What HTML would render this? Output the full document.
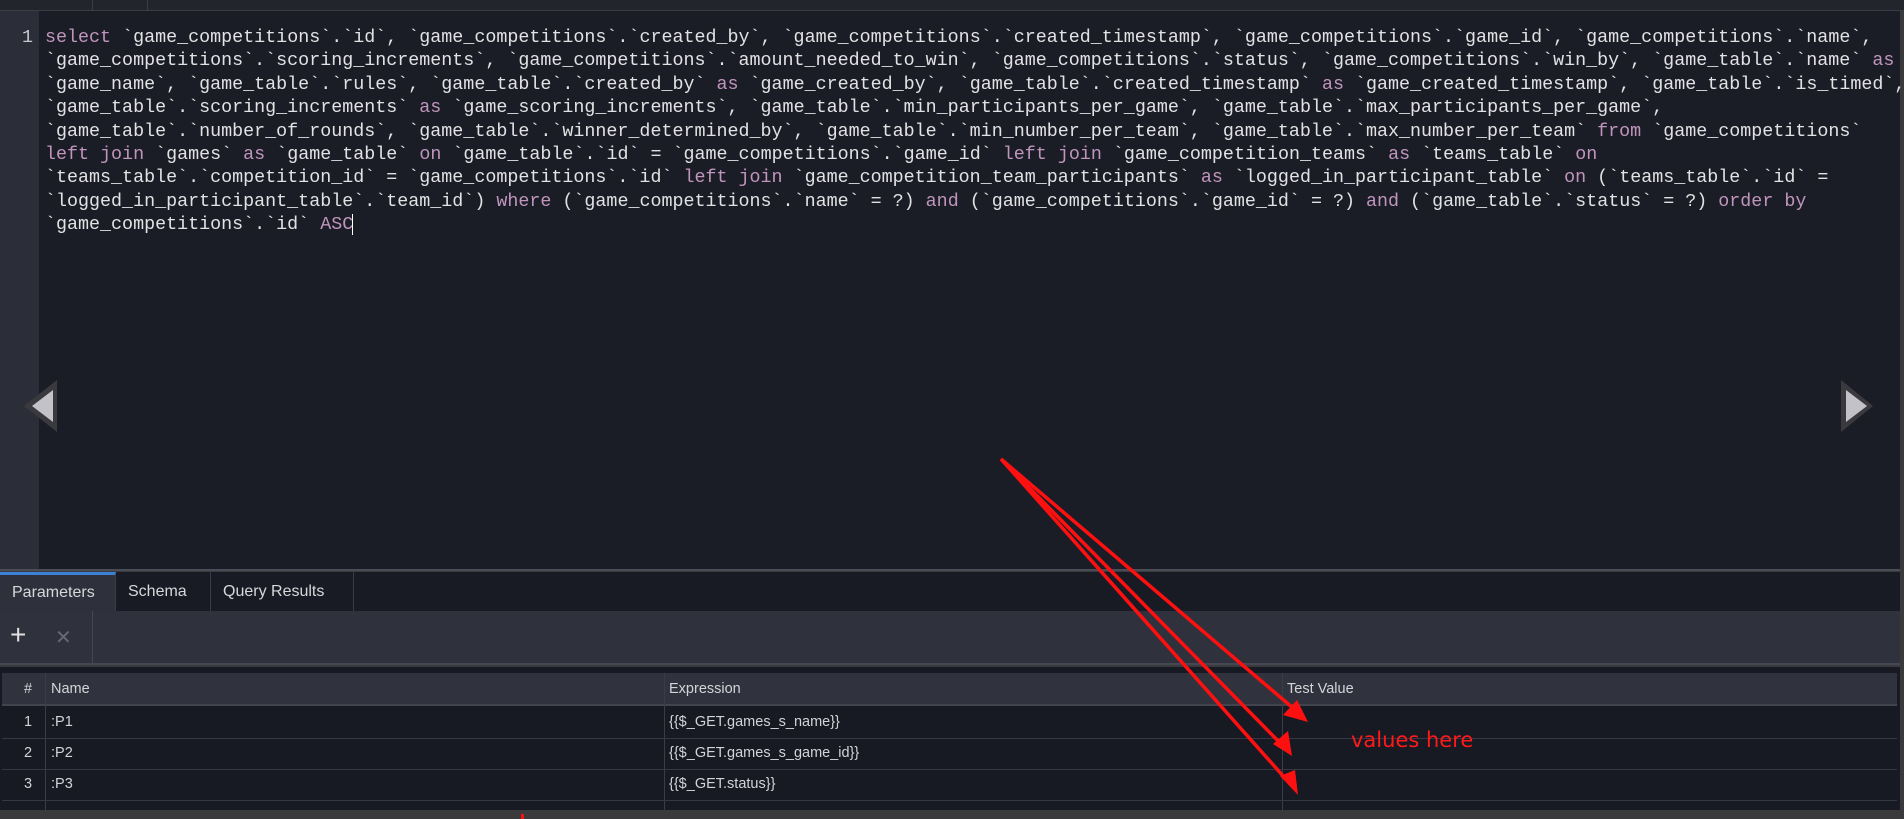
<!DOCTYPE html>
<html><head><meta charset="utf-8"><style>
*{margin:0;padding:0;box-sizing:border-box}
body{width:1904px;height:819px;background:#3a3a3c;position:relative;overflow:hidden;font-family:"Liberation Sans",sans-serif}
.top{position:absolute;left:0;top:0;width:1904px;height:11px;background:#23252d;border-bottom:1px solid #3a3c46}
.ed{position:absolute;left:0;top:11px;width:1900px;height:559px;background:#1b1d26}
.gut{position:absolute;left:0;top:11px;width:39px;height:559px;background:#2b2d38}
.code{position:absolute;left:45px;top:26px;width:1850px;font-family:"Liberation Mono",monospace;font-size:18.35px;line-height:23.4px;color:#e2e2e4;white-space:pre;letter-spacing:0}
.ln{position:absolute;left:22px;top:26px;font-family:"Liberation Mono",monospace;font-size:18.35px;line-height:23.4px;color:#c8c8cc}
.k{color:#c095bd}
.sep{position:absolute;left:0;top:569px;width:1900px;height:2px;background:#4a4c58}
.tabs{position:absolute;left:0;top:572px;width:1900px;height:39px;background:#191b24}
.tab{position:absolute;top:0;height:39px;color:#d8d8dc;font-size:16px;line-height:39px;padding-left:12px;border-right:1px solid #3a3c48}
.tb{position:absolute;left:0;top:611px;width:1900px;height:54px;background:#2f313c;border-bottom:2px solid #454754}
.tbl{position:absolute;left:0;top:667px;width:1900px;height:143px;background:#171923}
.hd{position:absolute;left:2px;top:6px;width:1895px;height:33px;background:#30323e;border-bottom:2px solid #41434f}
.cell{position:absolute;color:#d4d4d8;font-size:14.5px}
.row{position:absolute;left:2px;width:1895px;height:1px;background:#353744}
.vl{position:absolute;top:6px;width:1px;height:137px;background:#3a3c48}
</style></head><body>
<div class="top"></div>
<div style="position:absolute;left:92px;top:0;width:1px;height:11px;background:#3a3c46"></div>
<div style="position:absolute;left:147px;top:0;width:1px;height:11px;background:#3a3c46"></div>
<div class="ed"></div><div class="gut"></div>
<div class="ln">1</div>
<div class="code"><span class="k">select</span> `game_competitions`.`id`, `game_competitions`.`created_by`, `game_competitions`.`created_timestamp`, `game_competitions`.`game_id`, `game_competitions`.`name`,
`game_competitions`.`scoring_increments`, `game_competitions`.`amount_needed_to_win`, `game_competitions`.`status`, `game_competitions`.`win_by`, `game_table`.`name` <span class="k">as</span>
`game_name`, `game_table`.`rules`, `game_table`.`created_by` <span class="k">as</span> `game_created_by`, `game_table`.`created_timestamp` <span class="k">as</span> `game_created_timestamp`, `game_table`.`is_timed`,
`game_table`.`scoring_increments` <span class="k">as</span> `game_scoring_increments`, `game_table`.`min_participants_per_game`, `game_table`.`max_participants_per_game`,
`game_table`.`number_of_rounds`, `game_table`.`winner_determined_by`, `game_table`.`min_number_per_team`, `game_table`.`max_number_per_team` <span class="k">from</span> `game_competitions`
<span class="k">left join</span> `games` <span class="k">as</span> `game_table` <span class="k">on</span> `game_table`.`id` = `game_competitions`.`game_id` <span class="k">left join</span> `game_competition_teams` <span class="k">as</span> `teams_table` <span class="k">on</span>
`teams_table`.`competition_id` = `game_competitions`.`id` <span class="k">left join</span> `game_competition_team_participants` <span class="k">as</span> `logged_in_participant_table` <span class="k">on</span> (`teams_table`.`id` =
`logged_in_participant_table`.`team_id`) <span class="k">where</span> (`game_competitions`.`name` = ?) <span class="k">and</span> (`game_competitions`.`game_id` = ?) <span class="k">and</span> (`game_table`.`status` = ?) <span class="k">order by</span>
`game_competitions`.`id` <span class="k">ASC</span><span style="border-left:1.5px solid #fff;margin-left:-1px"></span></div>
<svg style="position:absolute;left:0;top:0" width="1904" height="819">
<polygon points="57,380 57,432 24,406" fill="#3a3a3e"/><polygon points="53,390 53,422 32,406" fill="#c2c2c8"/>
<polygon points="1841,380 1841,432 1873,406" fill="#3a3a3e"/><polygon points="1846,390 1846,422 1867,406" fill="#c2c2c8"/>
</svg>
<div class="sep"></div>
<div class="tabs">
<div class="tab" style="left:0;width:116px;background:#2e303b;border-top:3px solid #3b82d6;line-height:36px">Parameters</div>
<div class="tab" style="left:116px;width:95px">Schema</div>
<div class="tab" style="left:211px;width:143px">Query Results</div>
</div>
<div class="tb">
<div style="position:absolute;left:10px;top:8px;color:#e0e0e0;font-size:28px;font-weight:300">+</div>
<div style="position:absolute;left:55px;top:14px;color:#666872;font-size:20px">✕</div>
<div style="position:absolute;left:92px;top:0;width:1px;height:54px;background:#454754"></div>
</div>
<div class="tbl">
<div class="hd"></div>
<div class="cell" style="left:24px;top:14px">#</div>
<div class="cell" style="left:51px;top:14px">Name</div>
<div class="cell" style="left:669px;top:14px">Expression</div>
<div class="cell" style="left:1287px;top:14px">Test Value</div>
<div class="vl" style="left:45px"></div><div class="vl" style="left:664px"></div><div class="vl" style="left:1282px"></div>
<div class="row" style="top:71px"></div><div class="row" style="top:102px"></div><div class="row" style="top:133px"></div>
<div class="cell" style="left:24px;top:47px">1</div><div class="cell" style="left:51px;top:47px">:P1</div><div class="cell" style="left:669px;top:47px">{{$_GET.games_s_name}}</div>
<div class="cell" style="left:24px;top:78px">2</div><div class="cell" style="left:51px;top:78px">:P2</div><div class="cell" style="left:669px;top:78px">{{$_GET.games_s_game_id}}</div>
<div class="cell" style="left:24px;top:109px">3</div><div class="cell" style="left:51px;top:109px">:P3</div><div class="cell" style="left:669px;top:109px">{{$_GET.status}}</div>
</div>
<div style="position:absolute;left:1351px;top:728px;color:#ff1a1a;font-size:21px;font-family:'DejaVu Sans',sans-serif">values here</div>
<svg style="position:absolute;left:0;top:0" width="1904" height="819">
<g stroke="#ff1010" stroke-width="3.5" fill="#ff1010">
<line x1="1001" y1="459" x2="1300" y2="714"/><line x1="1001" y1="459" x2="1285" y2="748"/><line x1="1001" y1="459" x2="1292" y2="786"/>
</g>
<polygon points="1308,722 1283,715 1297,700" fill="#ff1010"/>
<polygon points="1292,756 1273,744 1288,731" fill="#ff1010"/>
<polygon points="1298,795 1280,776 1295,770" fill="#ff1010"/>
<rect x="521" y="814" width="3" height="5" fill="#ff1010"/>
</svg>
</body></html>
